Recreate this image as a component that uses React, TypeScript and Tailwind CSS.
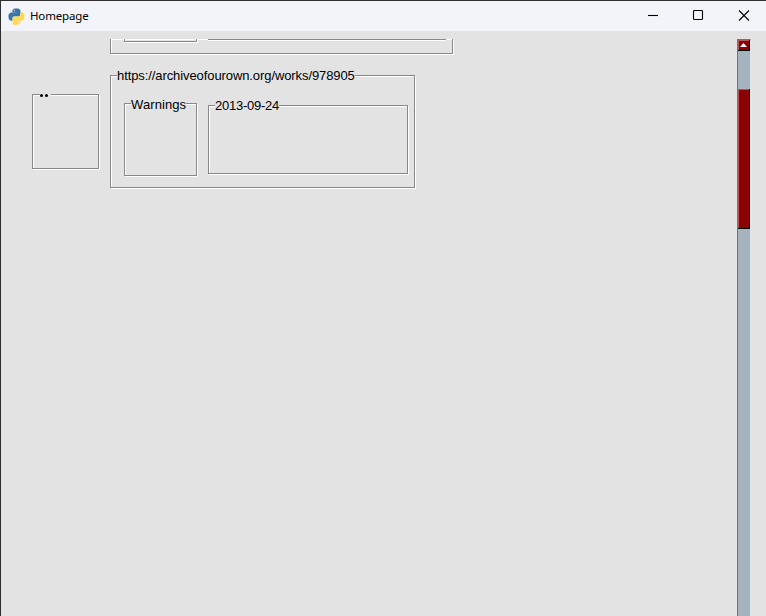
export default function App() {
  const frame = "border border-[#888888] shadow-[inset_1px_1px_0_#ffffff,1px_1px_0_#ffffff]";
  const label = "absolute bg-[#e3e3e3] leading-[16px] text-[13px] text-black whitespace-nowrap font-['Liberation_Sans',sans-serif]";
  return (
    <div className="w-[766px] h-[616px] flex flex-col overflow-hidden bg-[#e3e3e3] border-l border-t border-[#2e2e2e]">
      <div className="h-[30px] shrink-0 flex items-center bg-[#f2f4fa]">
        <svg width="17" height="17" viewBox="0 0 24 24" className="ml-[7px]">
          <path fill="#3a76a9" stroke="#3a76a9" strokeWidth="0.7" d="M11.9 1c-5.6 0-5.3 2.4-5.3 2.4v2.6h5.4v.8H4.6S1 6.4 1 12s3.1 5.5 3.1 5.5H6v-2.7s-.1-3.1 3.1-3.1h5.2s2.9 0 2.9-2.9V4s.5-3-5.3-3z" />
          <circle cx="9" cy="3.7" r="1" fill="#cfe0ee" />
          <path fill="#ffd94f" stroke="#ffd94f" strokeWidth="0.7" d="M12.1 23c5.6 0 5.3-2.4 5.3-2.4v-2.6H12v-.8h7.4s3.6.4 3.6-5.2-3.1-5.5-3.1-5.5H18v2.7s.1 3.1-3.1 3.1H9.7s-2.9 0-2.9 2.9v5.8s-.5 3 5.3 3z" />
          <circle cx="15" cy="20.3" r="1" fill="#fff6d0" />
        </svg>
        <span className="ml-[5px] text-[11.5px] tracking-[-0.15px] text-black font-['Noto_Sans',sans-serif]">Homepage</span>
        <div className="ml-auto flex items-center">
          <svg width="12" height="12" viewBox="0 0 12 12" className="mr-[33px]"><path d="M1 5.5h10" stroke="#000" strokeWidth="1.1" fill="none" /></svg>
          <svg width="12" height="12" viewBox="0 0 12 12" className="mr-[34px]"><rect x="1.5" y="0.5" width="9" height="9" rx="1" stroke="#000" strokeWidth="1.1" fill="none" /></svg>
          <svg width="12" height="12" viewBox="0 0 12 12" className="mr-[16px]"><path d="M1 0.5l10 10M11 0.5L1 10.5" stroke="#000" strokeWidth="1.1" fill="none" /></svg>
        </div>
      </div>
      <div className="flex-1 flex pt-[8px] min-h-0">
        <div className="w-[736px] shrink-0 overflow-hidden">
          <div className="pl-[109px]">
            <div className={`relative w-[343px] h-[15px] border-t-0 flex pl-[13px] gap-[11px] items-start ${frame}`}>
              <div className={`w-[73px] h-[3px] border-t-0 ${frame}`} />
              <div className="w-[238px] h-[1px] bg-[#888888] shadow-[0_1px_0_#ffffff]" />
            </div>
          </div>
          <div className="flex items-start pl-[31px] pt-[21px]">
            <div className={`relative w-[67px] h-[75px] mt-[19px] mr-[11px] shrink-0 ${frame}`}>
              <span className="absolute left-[7px] top-[-1px] h-[3px] w-[11px] bg-[#e3e3e3] flex items-center gap-[2px]">
                <i className="block w-[3px] h-[3px] rounded-full bg-black" />
                <i className="block w-[3px] h-[3px] rounded-full bg-black" />
              </span>
            </div>
            <div className={`relative w-[305px] h-[113px] flex items-start gap-[11px] pl-[13px] pt-[27px] shrink-0 ${frame}`}>
              <span className={`${label} left-[6px] top-[-8px] tracking-[-0.09px]`}>https://archiveofourown.org/works/978905</span>
              <div className={`relative w-[73px] h-[73px] shrink-0 ${frame}`}>
                <span className={`${label} left-[6px] top-[-7px] tracking-[0.1px]`}>Warnings</span>
              </div>
              <div className={`relative w-[200px] h-[69px] mt-[2px] shrink-0 ${frame}`}>
                <span className={`${label} left-[6px] top-[-8px] tracking-[-0.24px]`}>2013-09-24</span>
              </div>
            </div>
          </div>
        </div>
        <div className="w-[14px] shrink-0 flex flex-col bg-[#a6b2be] border-l border-[#6f757b] border-r border-r-[#d8e6ee] border-t border-t-[#6f757b]">
          <div className="h-[11px] flex items-center justify-center bg-[#8b0000] border-r border-b border-black shadow-[inset_1px_1px_0_#b25a5a]">
            <svg width="7" height="4" viewBox="0 0 7 4"><path d="M3.5 0L7 4H0z" fill="#ffffff" /></svg>
          </div>
          <div className="h-[140px] mt-[38px] bg-[#8b0000] border-r border-b border-black shadow-[inset_1px_1px_0_#b25a5a]" />
        </div>
        <div className="flex-1" />
      </div>
    </div>
  );
}
